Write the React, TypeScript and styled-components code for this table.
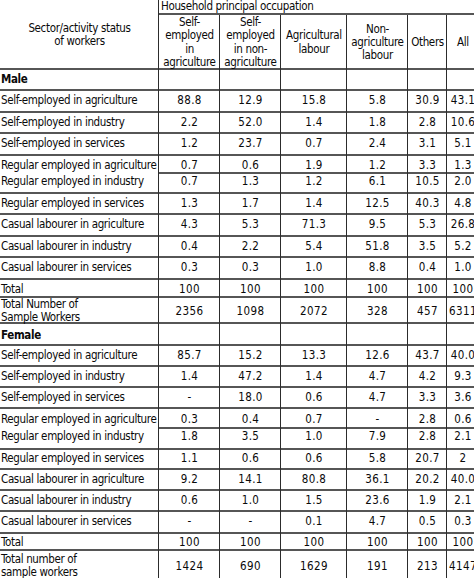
import React from "react";
import styled, { createGlobalStyle } from "styled-components";

const GlobalStyle = createGlobalStyle`
  html, body {
    margin: 0;
    padding: 0;
    background: #ffffff;
    overflow: hidden;
  }
`;

const V_LINE = "#2c2c2c";
const H_LINE = "#565656";

const Table = styled.table`
  border-collapse: separate;
  border-spacing: 0;
  table-layout: fixed;
  width: 479px;
  font-family: "DejaVu Sans Condensed", "DejaVu Sans", sans-serif;
  font-stretch: condensed;
  font-size: 11.5px;
  letter-spacing: -0.35px;
  color: #0a0a0a;
`;

const Row = styled.tr<{ $h: number }>`
  height: ${(p) => p.$h}px;
`;

const BaseCell = styled.td<{ $noBottom?: boolean; $top?: boolean; $multi?: boolean; $lift: number }>`
  box-sizing: border-box;
  padding: ${(p) => (p.$multi ? "0" : p.$top ? "2px 0 4px 0" : `0 0 ${p.$lift}px 0`)};
  border: none;
  box-shadow: inset -1px 0 0 ${V_LINE}
    ${(p) => (p.$noBottom ? "" : `, inset 0 -2px 0 ${H_LINE}`)};
  vertical-align: ${(p) => (p.$top ? "top" : "middle")};
  line-height: ${(p) => (p.$multi ? "13px" : "11px")};
  white-space: nowrap;
  overflow: hidden;
`;

const LabelCell = styled(BaseCell)`
  text-align: left;
  padding-left: 1px;
`;

const SectionCell = styled(BaseCell)`
  text-align: left;
  padding-left: 1px;
  font-weight: bold;
`;

const NumCell = styled(BaseCell)`
  text-align: center;
  letter-spacing: 0.4px;
`;

const HeadCell = styled.th`
  box-sizing: border-box;
  padding: 0;
  font-weight: normal;
  text-align: center;
  vertical-align: middle;
  line-height: 13.2px;
  box-shadow: inset -1px 0 0 ${V_LINE}, inset 0 -2px 0 ${H_LINE};
  white-space: nowrap;
`;

const GroupHeadCell = styled.th`
  box-sizing: border-box;
  padding: 0 0 0 2px;
  font-weight: normal;
  text-align: left;
  vertical-align: top;
  line-height: 13px;
  box-shadow: inset 0 -2px 0 ${H_LINE};
  white-space: nowrap;
`;

type DataRow = {
  label: React.ReactNode;
  values: string[];
  h: number;
  lift?: number;
  noBottomLabel?: boolean;
  top?: boolean;
  multi?: boolean;
};

type Section = {
  title: string;
  titleH: number;
  titleLift: number;
  rows: DataRow[];
};

const sections: Section[] = [
  {
    title: "Male",
    titleH: 21,
    titleLift: 3,
    rows: [
      { label: "Self-employed in agriculture", values: ["88.8", "12.9", "15.8", "5.8", "30.9", "43.1"], h: 22, lift: 4 },
      { label: "Self-employed in industry", values: ["2.2", "52.0", "1.4", "1.8", "2.8", "10.6"], h: 21 },
      { label: "Self-employed in services", values: ["1.2", "23.7", "0.7", "2.4", "3.1", "5.1"], h: 22 },
      { label: "Regular employed in agriculture", values: ["0.7", "0.6", "1.9", "1.2", "3.3", "1.3"], h: 18, lift: 0, noBottomLabel: true },
      { label: "Regular employed in industry", values: ["0.7", "1.3", "1.2", "6.1", "10.5", "2.0"], h: 20, top: true },
      { label: "Regular employed in services", values: ["1.3", "1.7", "1.4", "12.5", "40.3", "4.8"], h: 21 },
      { label: "Casual labourer in agriculture", values: ["4.3", "5.3", "71.3", "9.5", "5.3", "26.8"], h: 22 },
      { label: "Casual labourer in industry", values: ["0.4", "2.2", "5.4", "51.8", "3.5", "5.2"], h: 21 },
      { label: "Casual labourer in services", values: ["0.3", "0.3", "1.0", "8.8", "0.4", "1.0"], h: 22 },
      { label: "Total", values: ["100", "100", "100", "100", "100", "100"], h: 18, lift: 0 },
      {
        label: (
          <>
            Total Number of
            <br />
            Sample Workers
          </>
        ),
        values: ["2356", "1098", "2072", "328", "457", "6311"],
        h: 26,
        multi: true,
      },
    ],
  },
  {
    title: "Female",
    titleH: 22,
    titleLift: 0,
    rows: [
      { label: "Self-employed in agriculture", values: ["85.7", "15.2", "13.3", "12.6", "43.7", "40.0"], h: 21 },
      { label: "Self-employed in industry", values: ["1.4", "47.2", "1.4", "4.7", "4.2", "9.3"], h: 21 },
      { label: "Self-employed in services", values: ["-", "18.0", "0.6", "4.7", "3.3", "3.6"], h: 21 },
      { label: "Regular employed in agriculture", values: ["0.3", "0.4", "0.7", "-", "2.8", "0.6"], h: 20, lift: 0, noBottomLabel: true },
      { label: "Regular employed in industry", values: ["1.8", "3.5", "1.0", "7.9", "2.8", "2.1"], h: 21, top: true },
      { label: "Regular employed in services", values: ["1.1", "0.6", "0.6", "5.8", "20.7", "2"], h: 20 },
      { label: "Casual labourer in agriculture", values: ["9.2", "14.1", "80.8", "36.1", "20.2", "40.0"], h: 21 },
      { label: "Casual labourer in industry", values: ["0.6", "1.0", "1.5", "23.6", "1.9", "2.1"], h: 21 },
      { label: "Casual labourer in services", values: ["-", "-", "0.1", "4.7", "0.5", "0.3"], h: 22 },
      { label: "Total", values: ["100", "100", "100", "100", "100", "100"], h: 17, lift: 0 },
      {
        label: (
          <>
            Total number of
            <br />
            sample workers
          </>
        ),
        values: ["1424", "690", "1629", "191", "213", "4147"],
        h: 30,
        multi: true,
      },
    ],
  },
];

const colWidths = [159, 61, 61, 66, 61, 39, 32];

export default function App() {
  return (
    <>
      <GlobalStyle />
      <Table>
        <colgroup>
          {colWidths.map((w, i) => (
            <col key={i} style={{ width: w }} />
          ))}
        </colgroup>
        <thead>
          <Row $h={15}>
            <HeadCell rowSpan={2}>
              Sector/activity status
              <br />
              of workers
            </HeadCell>
            <GroupHeadCell colSpan={6}>Household principal occupation</GroupHeadCell>
          </Row>
          <Row $h={55}>
            <HeadCell>
              Self-
              <br />
              employed
              <br />
              in
              <br />
              agriculture
            </HeadCell>
            <HeadCell>
              Self-
              <br />
              employed
              <br />
              in non-
              <br />
              agriculture
            </HeadCell>
            <HeadCell>
              Agricultural
              <br />
              labour
            </HeadCell>
            <HeadCell>
              Non-
              <br />
              agriculture
              <br />
              labour
            </HeadCell>
            <HeadCell>Others</HeadCell>
            <HeadCell>All</HeadCell>
          </Row>
        </thead>
        {sections.map((s) => (
          <tbody key={s.title}>
            <Row $h={s.titleH}>
              <SectionCell $lift={s.titleLift}>{s.title}</SectionCell>
              {colWidths.slice(1).map((_, i) => (
                <NumCell key={i} $lift={s.titleLift} />
              ))}
            </Row>
            {s.rows.map((r, ri) => {
              const lift = r.lift ?? 3;
              return (
                <Row key={ri} $h={r.h}>
                  <LabelCell $noBottom={r.noBottomLabel} $top={r.top} $multi={r.multi} $lift={lift}>
                    {r.label}
                  </LabelCell>
                  {r.values.map((v, vi) => (
                    <NumCell key={vi} $multi={r.multi} $top={r.top} $lift={lift}>
                      {v}
                    </NumCell>
                  ))}
                </Row>
              );
            })}
          </tbody>
        ))}
      </Table>
    </>
  );
}
